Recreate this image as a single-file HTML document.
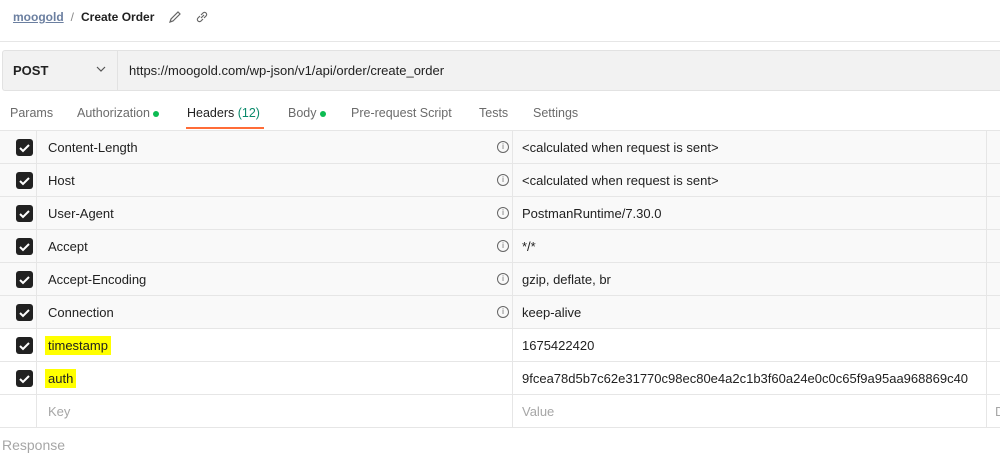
<!DOCTYPE html><html><head><style>
body{margin:0;width:1000px;height:463px;overflow:hidden;background:#fff;font-family:"Liberation Sans",sans-serif;font-size:13px;color:#212121;position:relative}
.a{position:absolute}
.row{position:absolute;left:0;width:1000px;height:32px;border-bottom:1px solid #e6e6e6}
.cb{position:absolute;left:16px;top:8px;width:17px;height:17px;background:#212121;border-radius:3px}
.k{position:absolute;left:48px;top:9px}
.v{position:absolute;left:522px;top:9px}
.i{position:absolute;left:497px;top:10px;width:10px;height:10px;border:1px solid #666;border-radius:50%;font-size:8px;line-height:10px;text-align:center;color:#666}
.hl{background:#ffff00;padding:2px 3px;margin-left:-3px}
.t{position:absolute;top:106px;color:#6b6b6b;white-space:nowrap;font-size:12.5px}
</style></head><body>
<div class="a" style="left:13px;top:10px;font-size:12px;white-space:nowrap"><span style="text-decoration:underline;font-weight:bold;color:#6b7fa0">moogold</span><span style="color:#888;margin:0 7px">/</span><b>Create Order</b></div>
<svg class="a" style="left:168px;top:10px" width="14" height="14" viewBox="0 0 14 14"><path d="M2 12l1-3 7-7 2 2-7 7z" fill="none" stroke="#666" stroke-width="1.2"/></svg>
<svg class="a" style="left:195px;top:10px" width="14" height="14" viewBox="0 0 14 14"><path d="M6 8l3-3M5 6l-2 2a2 2 0 003 3l2-2M9 8l2-2a2 2 0 00-3-3L6 5" fill="none" stroke="#666" stroke-width="1.2"/></svg>
<div class="a" style="left:0;top:41px;width:1000px;height:1px;background:#e6e6e6"></div>
<div class="a" style="left:2px;top:50px;width:998px;height:39px;background:#f2f2f2;border-top:1px solid #e2e2e2;border-bottom:1px solid #e2e2e2;border-left:1px solid #e2e2e2;border-radius:3px 0 0 3px"></div>
<div class="a" style="left:117px;top:51px;width:1px;height:39px;background:#e2e2e2"></div>
<div class="a" style="left:13px;top:63px;font-weight:bold">POST</div>
<svg class="a" style="left:96px;top:66px" width="10" height="7"><path d="M1 1l4 4 4-4" fill="none" stroke="#555" stroke-width="1.2"/></svg>
<div class="a" style="left:129px;top:63px">https://moogold.com/wp-json/v1/api/order/create_order</div>
<div class="t" style="left:10px">Params</div>
<div class="t" style="left:77px">Authorization <span style="display:inline-block;width:6px;height:6px;background:#0cbb52;border-radius:50%;vertical-align:middle"></span></div>
<div class="t" style="left:187px;color:#212121">Headers <span style="color:#0a8a6b">(12)</span></div>
<div class="a" style="left:186px;top:127px;width:78px;height:2px;background:#ff6c37"></div>
<div class="t" style="left:288px">Body <span style="display:inline-block;width:6px;height:6px;background:#0cbb52;border-radius:50%;vertical-align:middle"></span></div>
<div class="t" style="left:351px">Pre-request Script</div>
<div class="t" style="left:479px">Tests</div>
<div class="t" style="left:533px">Settings</div>
<div class="a" style="left:0;top:130px;width:1000px;height:1px;background:#e6e6e6"></div>
<div class="row" style="top:131px;background:#f9f9f9"><div class="cb"></div><div class="k">Content-Length</div><div class="i">i</div><div class="v">&lt;calculated when request is sent&gt;</div></div>
<div class="row" style="top:164px;background:#f9f9f9"><div class="cb"></div><div class="k">Host</div><div class="i">i</div><div class="v">&lt;calculated when request is sent&gt;</div></div>
<div class="row" style="top:197px;background:#f9f9f9"><div class="cb"></div><div class="k">User-Agent</div><div class="i">i</div><div class="v">PostmanRuntime/7.30.0</div></div>
<div class="row" style="top:230px;background:#f9f9f9"><div class="cb"></div><div class="k">Accept</div><div class="i">i</div><div class="v">*/*</div></div>
<div class="row" style="top:263px;background:#f9f9f9"><div class="cb"></div><div class="k">Accept-Encoding</div><div class="i">i</div><div class="v">gzip, deflate, br</div></div>
<div class="row" style="top:296px;background:#f9f9f9"><div class="cb"></div><div class="k">Connection</div><div class="i">i</div><div class="v">keep-alive</div></div>
<div class="row" style="top:329px"><div class="cb"></div><div class="k"><span class="hl">timestamp</span></div><div class="v">1675422420</div></div>
<div class="row" style="top:362px"><div class="cb"></div><div class="k"><span class="hl">auth</span></div><div class="v">9fcea78d5b7c62e31770c98ec80e4a2c1b3f60a24e0c0c65f9a95aa968869c40</div></div>
<div class="row" style="top:395px"><div class="k" style="color:#a6a6a6">Key</div><div class="v" style="color:#a6a6a6">Value</div><div style="position:absolute;left:995px;top:9px;color:#a6a6a6">D</div></div>
<div class="a" style="left:36px;top:131px;width:1px;height:297px;background:#e6e6e6"></div>
<div class="a" style="left:512px;top:131px;width:1px;height:297px;background:#e6e6e6"></div>
<div class="a" style="left:986px;top:131px;width:1px;height:297px;background:#e6e6e6"></div>
<svg class="a" style="left:0;top:0;pointer-events:none" width="1000" height="463">
<g fill="none" stroke="#fff" stroke-width="2"><path d="M20 148l3 3 6-6"/><path d="M20 181l3 3 6-6"/><path d="M20 214l3 3 6-6"/><path d="M20 247l3 3 6-6"/><path d="M20 280l3 3 6-6"/><path d="M20 313l3 3 6-6"/><path d="M20 346l3 3 6-6"/><path d="M20 379l3 3 6-6"/></g></svg>
<div class="a" style="left:2px;top:437px;font-size:14px;color:#a6a6a6">Response</div>
</body></html>
